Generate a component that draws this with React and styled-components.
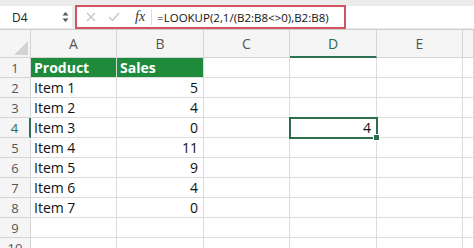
import styled, { createGlobalStyle } from "styled-components";

const GlobalStyle = createGlobalStyle`
  body {
    margin: 0;
    background: #fff;
    font-family: "Open Sans", "Liberation Sans", sans-serif;
    overflow: hidden;
  }
`;

const columns = ["A", "B", "C", "D", "E", ""];
const activeCol = "D";
const activeRow = 4;

// cell values by row number
const rows = [
  { n: 1, a: "Product", b: "Sales", header: true },
  { n: 2, a: "Item 1", b: "5" },
  { n: 3, a: "Item 2", b: "4" },
  { n: 4, a: "Item 3", b: "0", d: "4" },
  { n: 5, a: "Item 4", b: "11" },
  { n: 6, a: "Item 5", b: "9" },
  { n: 7, a: "Item 6", b: "4" },
  { n: 8, a: "Item 7", b: "0" },
  { n: 9 },
  { n: 10 },
];

const App = () => {
  return (
    <Page>
      <GlobalStyle />
      <Toolbar>
        <NameBox>
          <span>D4</span>
          <Spinner>
            <svg width="7" height="12" viewBox="0 0 7 12">
              <path d="M0.5 4.5 L3.5 1 L6.5 4.5 Z" fill="#555" />
              <path d="M0.5 7.5 L3.5 11 L6.5 7.5 Z" fill="#555" />
            </svg>
          </Spinner>
        </NameBox>
        <FormulaArea>
          <Highlight>
            <IconSlot>
              <svg width="10" height="10" viewBox="0 0 10 10">
                <path d="M1 1 L9 9 M9 1 L1 9" stroke="#c4c4c4" strokeWidth="1.3" />
              </svg>
            </IconSlot>
            <IconSlot>
              <svg width="12" height="10" viewBox="0 0 12 10">
                <path d="M1 5 L4.5 8.5 L11 1" stroke="#c4c4c4" strokeWidth="1.3" fill="none" />
              </svg>
            </IconSlot>
            <Fx>fx</Fx>
            <Formula>=LOOKUP(2,1/(B2:B8&lt;&gt;0),B2:B8)</Formula>
          </Highlight>
        </FormulaArea>
      </Toolbar>

      <Sheet>
        <Corner>
          <svg width="14" height="14" viewBox="0 0 14 14">
            <path d="M14 0 L14 14 L0 14 Z" fill="#d3d3d3" />
          </svg>
        </Corner>
        {columns.map((c, i) => (
          <ColHead key={i} $active={c === activeCol}>
            {c}
          </ColHead>
        ))}

        {rows.map((r) => (
          <Row key={r.n} r={r} />
        ))}
      </Sheet>
    </Page>
  );
};

const Row = ({ r }) => (
  <>
    <RowHead $active={r.n === activeRow}>{r.n}</RowHead>
    <Cell $header={r.header}>{r.a}</Cell>
    <Cell $header={r.header} $num={!r.header}>
      {r.b}
    </Cell>
    <Cell />
    <Cell $num $selected={r.n === activeRow}>
      {r.d}
      {r.n === activeRow && <Handle />}
    </Cell>
    <Cell />
    <Cell />
  </>
);

const Page = styled.div`
  width: 474px;
  height: 248px;
  overflow: hidden;
`;

const Toolbar = styled.div`
  display: flex;
  align-items: stretch;
  gap: 3px;
  height: 22px;
  padding: 6px 0 1px 0;
  background: #ececec;
  border-bottom: 1px solid #cdcdcd;
`;

const NameBox = styled.div`
  width: 72px;
  display: flex;
  align-items: center;
  justify-content: space-between;
  padding: 0 3px 0 12px;
  box-sizing: border-box;
  background: #fff;
  font-size: 12px;
  color: #222;
`;

const Spinner = styled.span`
  display: flex;
  align-items: center;
`;

const FormulaArea = styled.div`
  flex: 1;
  display: flex;
  background: #fff;
`;

const Highlight = styled.div`
  width: 271px;
  display: flex;
  align-items: center;
  border: 2px solid #d1545e;
  box-sizing: border-box;
  margin-top: -1px;
  margin-bottom: -1px;
  padding-left: 9px;
`;

const IconSlot = styled.span`
  display: flex;
  align-items: center;
  width: 22px;
`;

const Fx = styled.span`
  font-family: "Liberation Serif", serif;
  font-style: italic;
  font-size: 14px;
  color: #333;
  margin-left: 5px;
  padding-right: 6px;
  border-right: 1px solid #dcdcdc;
  line-height: 16px;
`;

const Formula = styled.span`
  margin-left: 5px;
  font-size: 11.5px;
  color: #111;
  white-space: nowrap;
`;

const Sheet = styled.div`
  display: grid;
  grid-template-columns: 31px 86px 87px 86px 87px 86px 1fr;
  grid-template-rows: 28px;
  grid-auto-rows: 20px;
  font-size: 14px;
`;

const Corner = styled.div`
  background: #f5f5f5;
  border-right: 1px solid #d4d4d4;
  border-bottom: 1px solid #d4d4d4;
  display: flex;
  align-items: flex-end;
  justify-content: flex-end;
  padding: 0 2px 2px 0;
`;

const ColHead = styled.div`
  background: #f5f5f5;
  border-right: 1px solid #d4d4d4;
  border-bottom: ${(p) => (p.$active ? "2px solid #2e7150" : "1px solid #d4d4d4")};
  color: ${(p) => (p.$active ? "#2e6a4a" : "#555")};
  display: flex;
  align-items: center;
  justify-content: center;
  font-size: 14px;
`;

const RowHead = styled.div`
  background: #f5f5f5;
  border-right: ${(p) => (p.$active ? "2px solid #2e7150" : "1px solid #d4d4d4")};
  border-bottom: 1px solid #d4d4d4;
  color: ${(p) => (p.$active ? "#2e6a4a" : "#555")};
  display: flex;
  align-items: center;
  justify-content: center;
  font-size: 13px;
`;

const Cell = styled.div`
  position: relative;
  box-sizing: border-box;
  border-right: 1px solid #dcdcdc;
  border-bottom: 1px solid #dcdcdc;
  background: ${(p) => (p.$header ? "#1e8b3c" : "#fff")};
  color: ${(p) => (p.$header ? "#fff" : "#111")};
  font-weight: ${(p) => (p.$header ? 700 : 400)};
  display: flex;
  align-items: center;
  justify-content: ${(p) => (p.$num ? "flex-end" : "flex-start")};
  padding: 0 5px 0 3px;
  line-height: 1;
  ${(p) =>
    p.$selected &&
    `
    outline: 2px solid #2e6e4c;
    outline-offset: -1px;
    z-index: 1;
  `}
`;

const Handle = styled.span`
  position: absolute;
  right: -4px;
  bottom: -4px;
  width: 5px;
  height: 5px;
  background: #2e6e4c;
  border: 1px solid #fff;
`;

export default App;
